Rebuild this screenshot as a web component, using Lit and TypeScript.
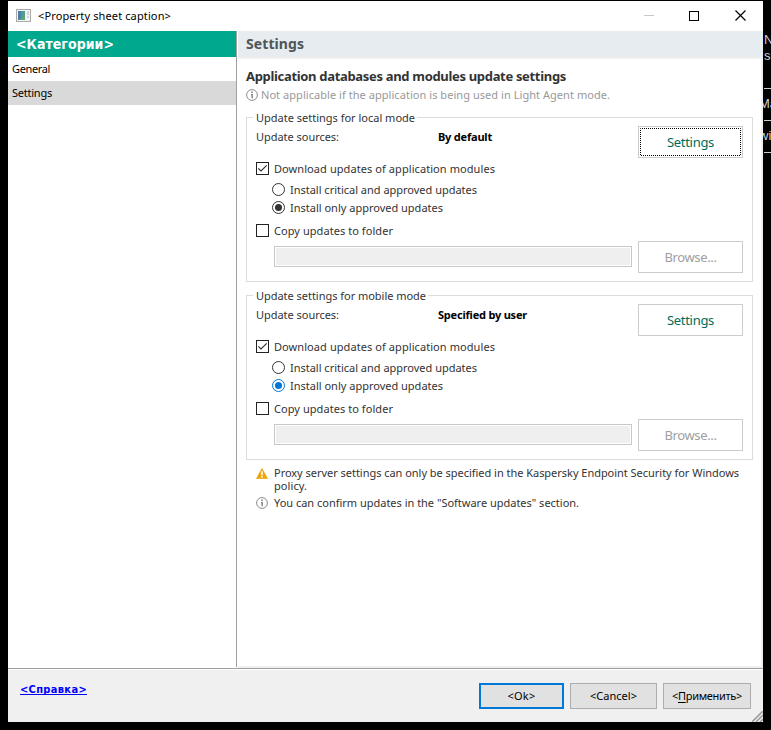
import { LitElement, html, css, svg, nothing } from "lit";
import { customElement, property } from "lit/decorators.js";

// One line of text whose tracking is adjusted so that it spans a given width.
@customElement("ui-text")
class UiText extends LitElement {
  @property({ type: Number }) span = 0;
  static styles = css`
    :host { display: inline-block; white-space: pre; flex: none; }
  `;
  firstUpdated() {
    const n = (this.textContent ?? "").length;
    const natural = this.getBoundingClientRect().width;
    if (this.span && n > 1) {
      this.style.letterSpacing = `${(this.span - natural) / n}px`;
    }
  }
  render() {
    return html`<slot></slot>`;
  }
}

const infoIcon = html`<svg width="12" height="12" viewBox="0 0 12 12">
  <circle cx="6" cy="6" r="5.4" fill="none" stroke="#8c8c8c" stroke-width="1" />
  <path d="M5.3 2.6h1.5v1.5H5.3zM5 5h1.8v4.2H5.5V6H5z" fill="#777" />
</svg>`;

const warnIcon = html`<svg width="12" height="11" viewBox="0 0 12 11">
  <path d="M6 .3 11.8 10.8H.2z" fill="#f0a30a" stroke="#f0a30a" stroke-width=".4" stroke-linejoin="round" />
  <path d="M5.2 3.2h1.6v4H5.2zM5.2 8.1h1.6v1.5H5.2z" fill="#fff" />
</svg>`;

@customElement("update-group")
class UpdateGroup extends LitElement {
  @property() caption = "";
  @property({ type: Number }) captionSpan = 0;
  @property() source = "";
  @property({ type: Number }) sourceSpan = 0;
  @property({ type: Boolean }) focused = false;
  @property({ type: Boolean }) accent = false;

  static styles = css`
    :host {
      display: flex; flex-direction: column; position: relative;
      box-sizing: border-box; height: 165px; width: 507px;
      border: 1px solid #dcdcdc; padding: 8px 9px 0 9px; color: #333;
      font: 11px/18px "Noto Sans", sans-serif;
    }
    .caption { position: absolute; top: -9px; left: 6px; padding: 0 2px 0 3px; background: #fff; height: 16px; line-height: 17px; }
    .sources { display: flex; height: 32px; line-height: 22px; }
    .label { width: 182px; }
    .value { font-weight: bold; color: #000; flex: 1; }
    .btn {
      box-sizing: border-box; width: 105px; height: 32px; border: 1px solid #ccc; background: #fff;
      display: flex; align-items: center; justify-content: center; padding: 0 0 1px 0;
      font-size: 13px; color: #006d5c; flex: none; position: relative;
    }
    .btn.off { color: #a0a0a0; }
    .ring { position: absolute; left: 1px; top: 1px; }
    .row { display: flex; align-items: center; }
    .check { height: 21px; gap: 5px; }
    .radio { height: 18px; gap: 5px; padding-left: 16px; }
    .first { margin-top: 2px; }
    svg { display: block; flex: none; }
    .radio svg { margin-top: -1px; }
    .copy { margin-top: 3px; height: 21px; }
    .folder { height: 32px; padding-left: 18px; gap: 6px; }
    .copy ui-text { padding-top: 1px; }
    .field { box-sizing: border-box; width: 358px; height: 21px; border: 1px solid #c8c8c8; background: #efefef; box-shadow: inset 0 0 0 1px #fff; margin-top: -1px; }
  `;

  private check(on: boolean) {
    return html`<svg width="13" height="13" viewBox="0 0 13 13">
      <rect x=".5" y=".5" width="12" height="12" fill="#fff" stroke="#222" />
      ${on ? svg`<path d="M2.3 6.3 5 9l5.7-5.7" fill="none" stroke="#333" stroke-width="1.2" />` : nothing}
    </svg>`;
  }

  private radio(on: boolean) {
    const color = on && this.accent ? "#0078d7" : "#333";
    return html`<svg width="13" height="13" viewBox="0 0 13 13">
      <circle cx="6.5" cy="6.5" r="6" fill="#fff" stroke=${color} />
      ${on ? svg`<circle cx="6.5" cy="6.5" r="3.5" fill=${color} />` : nothing}
    </svg>`;
  }

  render() {
    return html`
      <div class="caption"><ui-text span=${this.captionSpan}>${this.caption}</ui-text></div>
      <div class="sources">
        <div class="label"><ui-text span="83">Update sources:</ui-text></div>
        <div class="value"><ui-text span=${this.sourceSpan}>${this.source}</ui-text></div>
        <div class="btn">
          <ui-text span="47">Settings</ui-text>
          ${this.focused
            ? html`<svg class="ring" width="101" height="28"><rect x=".5" y=".5" width="100" height="27" fill="none" stroke="#000" stroke-dasharray="1 1" stroke-dashoffset=".5" /></svg>`
            : nothing}
        </div>
      </div>
      <div class="row check">${this.check(true)}<ui-text span="221">Download updates of application modules</ui-text></div>
      <div class="row radio first">${this.radio(false)}<ui-text span="187">Install critical and approved updates</ui-text></div>
      <div class="row radio">${this.radio(true)}<ui-text span="153">Install only approved updates</ui-text></div>
      <div class="row check copy">${this.check(false)}<ui-text span="119">Copy updates to folder</ui-text></div>
      <div class="row folder">
        <div class="field"></div>
        <div class="btn off"><ui-text span="52">Browse...</ui-text></div>
      </div>
    `;
  }
}

@customElement("app-root")
class AppRoot extends LitElement {
  static styles = css`
    :host { display: flex; width: 771px; height: 730px; background: #000; overflow: hidden; color: #000; font: 11px/18px "Noto Sans", sans-serif; }
    svg { display: block; flex: none; }
    .window { margin: 1px 0 0 8px; width: 755px; height: 721px; background: #fff; display: flex; flex-direction: column; flex: none; }
    .title { height: 30px; display: flex; align-items: center; padding-left: 8px; flex: none; }
    .title svg.app { margin: -2px 7px 0 0; }
    .controls { margin: -1px 17px 0 auto; display: flex; align-items: center; }
    .controls .max { margin: 0 36px 0 35px; }
    .main { display: flex; height: 637px; flex: none; }
    .side { width: 228px; border-right: 1px solid #a0a0a0; height: 636px; }
    .cat { height: 26px; line-height: 26px; padding-left: 8px; background: #00a88e; color: #fff; font-family: "DejaVu Sans Condensed", "DejaVu Sans", sans-serif; font-weight: bold; font-size: 14px; }
    .item { height: 24px; line-height: 24px; padding-left: 4px; }
    .item.on { background: #d9d9d9; }
    .page { box-sizing: border-box; width: 525px; margin-left: 1px; border-right: 2px solid #f0f0f0; border-bottom: 2px solid #f0f0f0; }
    .head { width: 525px; height: 26px; line-height: 26px; background: #e6ecef; color: #4f5659; font-weight: bold; font-size: 14px; border-bottom: 2px solid #f0f0f0; }
    .head ui-text { margin-left: 8px; }
    .body { padding: 8px 0 0 8px; }
    h1 { margin: 0; font-size: 13px; line-height: 19px; color: #333; }
    .note { display: flex; align-items: center; gap: 3px; height: 18px; color: #999; }
    .note svg { margin-top: -1px; }
    update-group { margin-top: 13px; }
    .hint { display: flex; gap: 6px; padding-left: 10px; color: #333; line-height: 13px; }
    .lines { display: flex; flex-direction: column; align-items: flex-start; }
    .warn { margin-top: 6px; height: 27px; }
    .warn svg { margin-top: 2px; }
    .info { margin-top: 3px; }
    .info svg { margin-top: 1px; }
    .foot { flex: 1; border-top: 1px solid #a0a0a0; background: #f0f0f0; box-shadow: inset 0 1px #fff; display: flex; position: relative; }
    .help { margin: 12px 0 0 12px; color: #0000ff; font-weight: bold; height: 18px; font-family: "DejaVu Sans Condensed", "DejaVu Sans", sans-serif; }
    .help ui-text { height: 13px; line-height: 18px; border-bottom: 1px solid #0000ff; }
    .buttons { display: flex; margin: 14px 12px 0 auto; gap: 6px; height: 26px; }
    .b { box-sizing: border-box; border: 1px solid #adadad; background: #e1e1e1; display: flex; align-items: center; justify-content: center; width: 88px; }
    .b.main-action { border: 2px solid #0078d7; width: 85px; }
    .b.cancel { width: 87px; }
    .grip { position: absolute; right: 0; bottom: 0; }
    .behind { flex: 1; min-width: 0; overflow: hidden; color: #d0d0d0; font: 13px/16px "Liberation Sans", sans-serif; padding: 32px 0 0 1px; }
    .behind div { height: 16px; white-space: nowrap; }
    .behind .cut { margin-left: -5px; }
    .behind .rule { background: repeating-linear-gradient(90deg, #ccc 0 7px, #333 7px 8px) 0 8px / 100% 1px no-repeat; }
    u { text-underline-offset: 2px; }
  `;

  render() {
    return html`
      <div class="window">
        <div class="title">
          <svg class="app" width="15" height="13" viewBox="0 0 15 13">
            <rect x=".5" y=".5" width="14" height="12" fill="#f4f4f4" stroke="#aaa" />
            <rect x="2" y="2" width="7" height="9" fill="#4f9a96" />
            <path d="M2 2h3v9H2z" fill="#4c7ea6" /><path d="M3 11 9 4v7z" fill="#5aa07c" />
            <path d="M11 3h2M11 5h2M11 8h2" stroke="#b8b8b8" />
          </svg>
          <ui-text span="133">&lt;Property sheet caption&gt;</ui-text>
          <div class="controls">
            <svg width="10" height="11"><path d="M0 5.5h10" stroke="#c8c8c8" /></svg>
            <svg class="max" width="10" height="10"><rect x=".5" y=".5" width="9" height="9" fill="none" stroke="#000" /></svg>
            <svg width="11" height="11"><path d="M.5.5l10 10M10.500.5l-10 10" stroke="#000" stroke-width="1.2" /></svg>
          </div>
        </div>
        <div class="main">
          <div class="side">
            <div class="cat"><ui-text span="98">&lt;Категории&gt;</ui-text></div>
            <div class="item"><ui-text span="38">General</ui-text></div>
            <div class="item on"><ui-text span="40">Settings</ui-text></div>
          </div>
          <div class="page">
            <div class="head"><ui-text span="58">Settings</ui-text></div>
            <div class="body">
              <h1><ui-text span="320">Application databases and modules update settings</ui-text></h1>
              <div class="note">${infoIcon}<ui-text span="349">Not applicable if the application is being used in Light Agent mode.</ui-text></div>
              <update-group caption="Update settings for local mode" .captionSpan=${159} source="By default" .sourceSpan=${54} focused></update-group>
              <update-group caption="Update settings for mobile mode" .captionSpan=${170} source="Specified by user" .sourceSpan=${89} accent></update-group>
              <div class="hint warn">${warnIcon}<div class="lines">
                <ui-text span="465">Proxy server settings can only be specified in the Kaspersky Endpoint Security for Windows</ui-text>
                <ui-text span="33">policy.</ui-text>
              </div></div>
              <div class="hint info">${infoIcon}<ui-text span="305">You can confirm updates in the "Software updates" section.</ui-text></div>
            </div>
          </div>
        </div>
        <div class="foot">
          <div class="help"><ui-text span="67">&lt;Справка&gt;</ui-text></div>
          <div class="buttons">
            <div class="b main-action"><ui-text span="28">&lt;Ok&gt;</ui-text></div>
            <div class="b cancel"><ui-text span="47">&lt;Cancel&gt;</ui-text></div>
            <div class="b"><ui-text span="70">&lt;<u>П</u>рименить&gt;</ui-text></div>
          </div>
          <svg class="grip" width="11" height="11"><path d="M0 11 11 0M4 11l7-7M8 11l3-3" stroke="#a0a0a0" stroke-width="1.6" /></svg>
        </div>
      </div>
      <div class="behind">
        <div>N</div>
        <div>s</div>
        <div></div>
        <div class="rule"></div>
        <div class="cut">Ma</div>
        <div class="rule"></div>
        <div class="cut">wi</div>
        <div class="rule"></div>
      </div>
    `;
  }
}
